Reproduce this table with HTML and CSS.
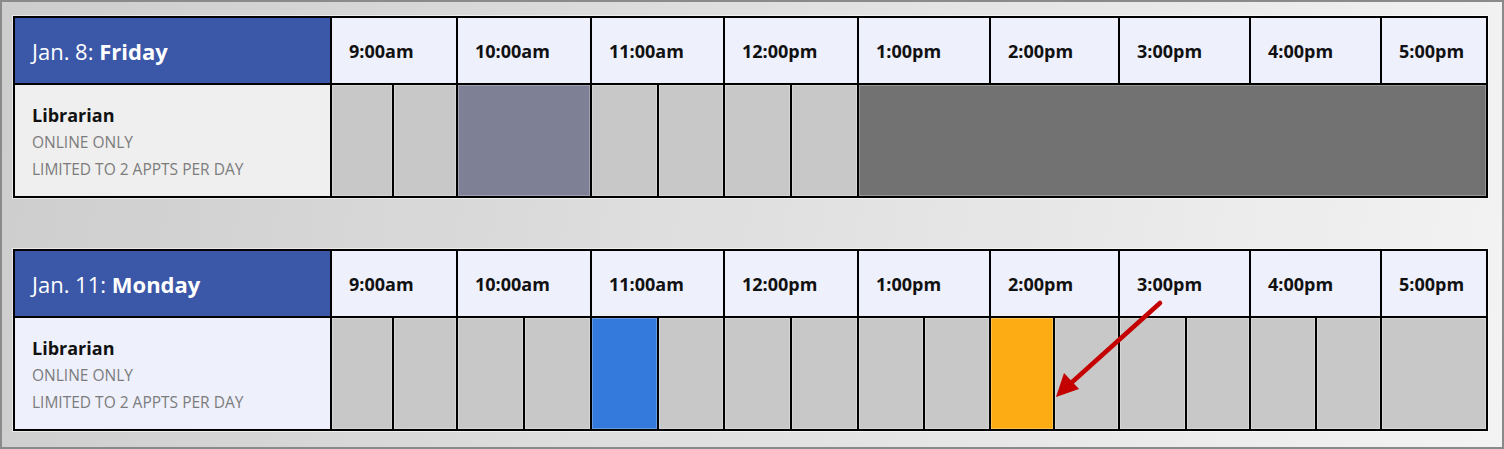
FILE: index.html
```html
<!DOCTYPE html>
<html>
<head>
<meta charset="utf-8">
<link rel="stylesheet" href="styles.css">
</head>
<body>
<div class="frame">
  <div class="sched">
    <div class="date">Jan. 8: <b>Friday</b></div>
    <div class="time">9:00am</div>
    <div class="time">10:00am</div>
    <div class="time">11:00am</div>
    <div class="time">12:00pm</div>
    <div class="time">1:00pm</div>
    <div class="time">2:00pm</div>
    <div class="time">3:00pm</div>
    <div class="time">4:00pm</div>
    <div class="time last">5:00pm</div>
    <div class="label grey">
      <div class="who">Librarian</div>
      <div class="note">ONLINE ONLY</div>
      <div class="note">LIMITED TO 2 APPTS PER DAY</div>
    </div>
    <div class="slot"></div>
    <div class="slot"></div>
    <div class="slot booked span2"></div>
    <div class="slot"></div>
    <div class="slot"></div>
    <div class="slot"></div>
    <div class="slot"></div>
    <div class="slot closed span9"></div>
  </div>

  <div class="sched">
    <div class="date">Jan. 11: <b>Monday</b></div>
    <div class="time">9:00am</div>
    <div class="time">10:00am</div>
    <div class="time">11:00am</div>
    <div class="time">12:00pm</div>
    <div class="time">1:00pm</div>
    <div class="time">2:00pm</div>
    <div class="time">3:00pm</div>
    <div class="time">4:00pm</div>
    <div class="time last">5:00pm</div>
    <div class="label">
      <div class="who">Librarian</div>
      <div class="note">ONLINE ONLY</div>
      <div class="note">LIMITED TO 2 APPTS PER DAY</div>
    </div>
    <div class="slot"></div>
    <div class="slot"></div>
    <div class="slot"></div>
    <div class="slot"></div>
    <div class="slot mine"></div>
    <div class="slot"></div>
    <div class="slot"></div>
    <div class="slot"></div>
    <div class="slot"></div>
    <div class="slot"></div>
    <div class="slot picked"></div>
    <div class="slot"></div>
    <div class="slot"></div>
    <div class="slot"></div>
    <div class="slot"></div>
    <div class="slot"></div>
    <div class="slot"></div>
  </div>

  <svg class="arrow" width="120" height="110" viewBox="0 0 120 110">
    <line x1="110" y1="5" x2="20" y2="86" stroke="#c40000" stroke-width="4.5" stroke-linecap="round"/>
    <polygon points="6,99 14,75 29,91" fill="#c40000"/>
  </svg>
</div>
</body>
</html>
```

FILE: styles.css
```css
html, body {
  margin: 0;
  padding: 0;
}
body {
  font-family: "Open Sans", "DejaVu Sans", sans-serif;
}
.frame {
  position: relative;
  width: 1504px;
  height: 449px;
  box-sizing: border-box;
  border: 2px solid #8a8a8a;
  background: linear-gradient(100deg, #cdcdcd 0%, #dedede 45%, #f3f3f3 100%);
  padding: 14px 0 0 11px;
  display: flex;
  flex-direction: column;
  gap: 51px;
}
.sched {
  display: grid;
  grid-template-columns: 315px 60px 62px 65px 65px 65px 64px 65px 65px 64px 64px 62px 63px 65px 62px 64px 63px 104px;
  grid-template-rows: 65px 111px;
  gap: 2px;
  padding: 2px;
  background: #000;
  width: 1475px;
  box-sizing: border-box;
  box-shadow: 0 0 0 1px rgba(255, 255, 255, 0.55);
}
.date {
  background: #3b57a8;
  color: #fff;
  font-size: 22px;
  display: flex;
  align-items: center;
  padding-left: 17px;
  padding-top: 1px;
  white-space: pre;
}
.date b {
  font-weight: 700;
}
.time {
  grid-column: span 2;
  background: #eef0fc;
  font-size: 18px;
  font-weight: 700;
  color: #111;
  display: flex;
  align-items: center;
  padding-left: 17px;
  padding-top: 1px;
}
.time.last {
  grid-column: span 1;
}
.label {
  background: #eef0fc;
  padding: 16px 0 0 17px;
}
.label.grey {
  background: #efefef;
}
.who {
  font-size: 18px;
  font-weight: 700;
  color: #111;
  line-height: 28px;
}
.note {
  font-size: 15.5px;
  color: #7c7c7c;
  line-height: 27px;
}
.slot {
  background: #c8c8c8;
  box-shadow: inset 0 0 0 1px rgba(255, 255, 255, 0.25);
}
.span2 {
  grid-column: span 2;
}
.span9 {
  grid-column: span 9;
}
.booked {
  background: #7e8096;
}
.closed {
  background: #727272;
}
.mine {
  background: #3479dc;
}
.picked {
  background: #fdac13;
}
.arrow {
  position: absolute;
  left: 1048px;
  top: 296px;
}
```
